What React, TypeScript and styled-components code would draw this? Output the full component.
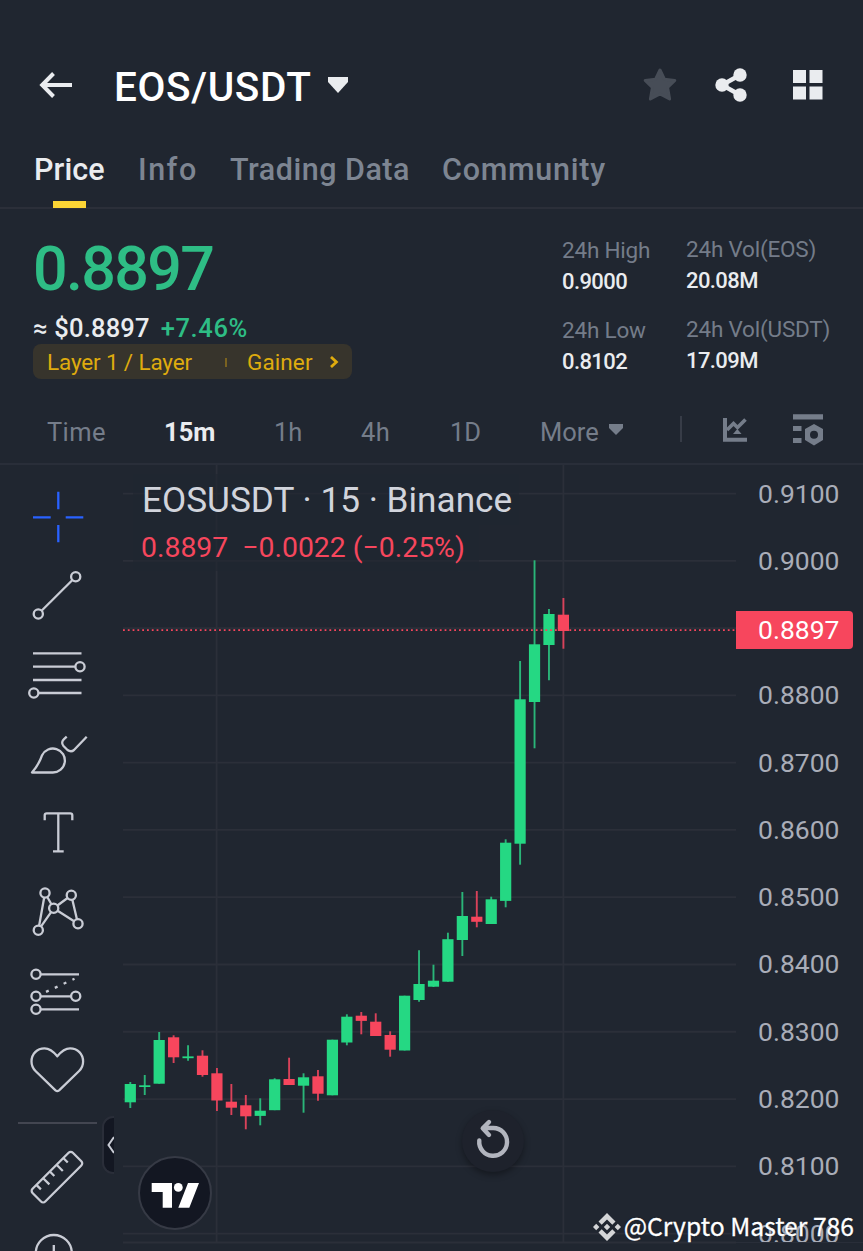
import React from "react";
import styled, { createGlobalStyle } from "styled-components";

const c = {
  bg: "#202630",
  line: "#2b2f39",
  text: "#eaecef",
  muted: "#7d8592",
  green: "#2ebd85",
  red: "#f6465d",
  up: "#25d883",
  tool: "#c9ccd5",
};

const Global = createGlobalStyle`
  html, body { margin: 0; background: ${c.bg}; }
  body { font-family: Roboto, "Liberation Sans", sans-serif; overflow: hidden; }
  * { box-sizing: border-box; }
  svg { display: block; }
`;

const Screen = styled.main`
  width: 863px;
  height: 1251px;
  overflow: hidden;
  display: flex;
  flex-direction: column;
  position: relative;
  color: ${c.text};
  background: ${c.bg};
`;

const Header = styled.header`
  height: 130px;
  padding: 40px 38px 0;
  display: flex;
  align-items: center;
`;

const Pair = styled.h1<{ $ls: number }>`
  margin: 4px 15px 0 40px;
  font-size: 40.5px;
  line-height: 46px;
  font-weight: 500;
  color: #fff;
  letter-spacing: ${(p) => p.$ls}px;
`;

const HeaderActions = styled.div`
  margin-left: auto;
  display: flex;
  align-items: center;
  gap: 38px;
`;

const Tabs = styled.nav`
  height: 79px;
  padding: 0 34px;
  display: grid;
  grid-template-columns: 104px 92px 212px auto;
  border-bottom: 2px solid ${c.line};
`;

const Tab = styled.a<{ $active?: boolean; $ls?: number }>`
  position: relative;
  justify-self: start;
  padding-top: 22px;
  font-size: 30.5px;
  line-height: 36px;
  font-weight: 500;
  white-space: nowrap;
  letter-spacing: ${(p) => p.$ls ?? 0}px;
  color: ${(p) => (p.$active ? c.text : c.muted)};
  &::after {
    content: "";
    display: ${(p) => (p.$active ? "block" : "none")};
    position: absolute;
    left: 19px;
    top: 71px;
    width: 33px;
    height: 7px;
    background: #fcd535;
  }
`;

const Summary = styled.section`
  height: 191px;
  padding: 24px 0 0 33px;
  display: grid;
  grid-template-columns: 529px 124px auto;
`;

const LastPrice = styled.div`
  margin-top: 1px;
  font-size: 61px;
  line-height: 70px;
  font-weight: 500;
  color: ${c.green};
  letter-spacing: -1.7px;
`;

const Fiat = styled.div`
  display: flex;
  gap: 11px;
  height: 30px;
  margin-top: 9px;
  font-size: 25.5px;
  line-height: 30px;
  font-weight: 500;
  letter-spacing: 0.2px;
`;

const Change = styled.span`
  color: ${c.green};
  letter-spacing: 0.6px;
`;

const Tag = styled.div`
  width: 319px;
  height: 35px;
  margin-top: 1px;
  padding: 0 13px 0 14px;
  border-radius: 8px;
  display: grid;
  grid-template-columns: 178px 22px 1fr 9px;
  align-items: center;
  background: #37342c;
  color: #dfab0e;
  font-size: 22.5px;
  line-height: 35px;
`;

const TagDivider = styled.i`
  width: 2px;
  height: 9px;
  background: #7a6220;
`;

const TagText = styled.span<{ $ls: number }>`
  padding-top: 1px;
  letter-spacing: ${(p) => p.$ls}px;
  white-space: nowrap;
`;

const Stats = styled.dl<{ $top: number }>`
  margin: ${(p) => p.$top}px 0 0;
  white-space: nowrap;
`;

const StatLabel = styled.dt<{ $ls: number }>`
  font-size: 22.5px;
  line-height: 32px;
  color: #747c89;
  letter-spacing: ${(p) => p.$ls}px;
`;

const StatValue = styled.dd`
  margin: 0 0 17px;
  font-size: 22px;
  line-height: 31px;
  font-weight: 500;
  letter-spacing: -0.6px;
`;

const Frames = styled.nav`
  height: 65px;
  padding-left: 47px;
  display: grid;
  grid-template-columns: 117px 110px 87px 89px 90px 140px 42px 70px auto;
  align-items: center;
  border-bottom: 2px solid #292e39;
  white-space: nowrap;
`;

const Frame = styled.span<{ $active?: boolean; $ls?: number }>`
  display: flex;
  align-items: center;
  gap: 9px;
  font-size: 25.5px;
  line-height: 30px;
  font-weight: ${(p) => (p.$active ? 700 : 400)};
  color: ${(p) => (p.$active ? c.text : "#757d8a")};
  letter-spacing: ${(p) => p.$ls ?? 0}px;
`;

const FrameDivider = styled.i`
  width: 2px;
  height: 26px;
  margin-top: -5px;
  background: #373c47;
`;

const FrameIcon = styled.svg`
  margin-top: -4px;
`;

const Workspace = styled.section`
  flex: 1;
  min-height: 0;
  display: grid;
  grid-template-columns: 123px 613px 127px;
  position: relative;
`;

const Toolbar = styled.aside`
  width: 115px;
  padding: 12px 0 0 18px;
`;

const ToolSvg = styled.svg<{ $active?: boolean }>`
  width: 79px;
  height: 79px;
  fill: none;
  stroke: ${(p) => (p.$active ? "#2962ff" : c.tool)};
  stroke-width: 2.3;
  stroke-linejoin: round;
`;

const ToolDivider = styled.hr`
  width: 79px;
  height: 2px;
  margin: 13px 0;
  border: 0;
  background: #434651;
`;

const Collapse = styled.button`
  position: absolute;
  left: 102px;
  top: 651px;
  width: 12px;
  height: 58px;
  padding: 0;
  border: 2px solid #2a2e39;
  border-right: 0;
  border-radius: 11px 0 0 11px;
  background: #131722;
  overflow: hidden;
`;

const Plot = styled.div`
  position: relative;
`;

const Legend = styled.div`
  position: absolute;
  left: 10px;
  top: 9px;
`;

const LegendTitle = styled.div`
  width: 386px;
  height: 51px;
  padding-left: 9px;
  font-size: 35.2px;
  line-height: 52px;
  color: #d1d4dc;
  white-space: nowrap;
  background: rgba(32, 38, 48, 0.6);
`;

const LegendValues = styled.div`
  display: flex;
  gap: 14px;
  width: 346px;
  height: 46px;
  padding-left: 8px;
  font-size: 28.4px;
  line-height: 45px;
  color: ${c.red};
  white-space: nowrap;
  background: rgba(32, 38, 48, 0.6);
`;

const Brand = styled.div`
  position: absolute;
  left: 15px;
  top: 691px;
  width: 74px;
  height: 74px;
  border-radius: 50%;
  border: 2px solid #363a45;
  background: #131722;
`;

const Reset = styled.button`
  position: absolute;
  left: 339px;
  top: 645px;
  width: 62px;
  height: 62px;
  padding: 0;
  border: 0;
  border-radius: 50%;
  background: #1e222c;
  box-shadow: 0 3px 6px rgba(0, 0, 0, 0.35);
`;

const Axis = styled.div`
  margin-top: -5px;
  height: 783px;
  overflow: hidden;
  border-bottom: 1px solid #292e39;
`;

const AxisRow = styled.div`
  height: 67.27px;
  padding: 0 0 1px 22px;
  display: flex;
  align-items: center;
  font-size: 26.5px;
  color: #a9adb8;
`;

const PriceTag = styled.div`
  width: 117px;
  height: 38px;
  margin: 4px 0 0 -22px;
  padding-left: 22px;
  line-height: 38px;
  border-radius: 0 4px 4px 0;
  color: #fff;
  background: #f7465d;
`;

const Watermark = styled.div`
  position: absolute;
  right: 9px;
  bottom: 4px;
  display: flex;
  align-items: center;
  gap: 3px;
  height: 40px;
  font: 400 24.7px/36px "Noto Sans CJK SC", "Noto Sans", sans-serif;
  color: #fff;
  white-space: nowrap;
  text-shadow: 0 0 2px rgba(0, 0, 0, 0.35);
  -webkit-text-stroke: 0.3px #fff;
  & > span { margin-top: -4px; }
`;

type Candle = [number, number, number, number, 0 | 1];

// wick top, body top, body bottom, wick bottom, rising
const candles: Candle[] = [
  [1082, 1084, 1102.3, 1108, 1],
  [1075, 1085.3, 1087, 1095, 1],
  [1032, 1040, 1083.7, 1083.7, 1],
  [1035.3, 1037.3, 1057.3, 1063, 0],
  [1045.3, 1056.4, 1058.2, 1060.7, 1],
  [1050.3, 1055.7, 1075, 1076.7, 0],
  [1068, 1073.3, 1100.5, 1111, 0],
  [1084, 1101.7, 1107.7, 1115, 0],
  [1095, 1105.3, 1116.3, 1129.3, 0],
  [1098.3, 1110.7, 1115.9, 1125.3, 1],
  [1078.3, 1079.3, 1110.2, 1110.2, 1],
  [1057.7, 1079, 1085, 1085, 0],
  [1073.3, 1077.3, 1085.7, 1112.7, 1],
  [1070, 1076.3, 1093.7, 1100.7, 0],
  [1039.7, 1039.7, 1095.3, 1095.3, 1],
  [1014.3, 1016.7, 1042.5, 1045.3, 1],
  [1012, 1015.7, 1020.9, 1034.3, 0],
  [1013.3, 1021.7, 1036, 1036, 0],
  [1031.3, 1035, 1049.7, 1056.7, 0],
  [995.7, 995.7, 1050.5, 1050.5, 1],
  [950.3, 984, 1000, 1001.7, 1],
  [964.7, 980.7, 986.7, 987, 1],
  [932.7, 939.2, 981.7, 981.7, 1],
  [892, 916, 940, 956, 1],
  [891, 916.7, 921.8, 927.3, 0],
  [896.7, 899.3, 924, 924, 1],
  [839.3, 842.7, 900.9, 907.3, 1],
  [661, 699.3, 843.7, 864.7, 1],
  [560.3, 644.3, 702, 748.3, 1],
  [609, 614, 645, 680.3, 1],
  [598, 614.7, 631, 648.7, 0],
].map((k) => [k[0] - 465, k[1] - 465, k[2] - 465, k[3] - 465, k[4]] as Candle);

const levels = Array.from({ length: 12 }, (_, i) => (0.91 - i * 0.01).toFixed(4));

const Node = ({ x, y }: { x: number; y: number }) => <circle cx={x} cy={y} r={4.6} fill={c.bg} />;

const Tool = ({ children, active }: { children: React.ReactNode; active?: boolean }) => (
  <ToolSvg viewBox="-39.5 -40 79 79" $active={active}>{children}</ToolSvg>
);

const Chart = () => (
  <svg width="613" height="786" viewBox="0 0 613 786">
    <g stroke={c.line} strokeWidth="1.8">
      {levels.map((l, i) => <path key={l} d={`M0 ${28.6 + i * 67.27}H613`} />)}
      <path d="M93.6 0V777M440.4 0V777M0 777.5H613" />
    </g>
    {candles.map(([h, t, b, l, up], i) => {
      const x = 7.3 + i * 14.437;
      return (
        <g key={i}>
          <path d={`M${x} ${h}V${l}`} stroke={up ? "#2ab578" : "#d9425a"} strokeWidth="1.9" />
          <rect x={x - 5.6} y={t} width="11.2" height={b - t} fill={up ? c.up : "#f7465d"} />
        </g>
      );
    })}
    <path d="M0 165.2H613" stroke={c.red} strokeWidth="1.7" strokeDasharray="1.8 3" />
  </svg>
);

export default function App() {
  return (
    <Screen>
      <Global />
      <Header>
        <svg width="36" height="30" viewBox="0 0 36 30" fill="none" stroke={c.text} strokeWidth="4">
          <path d="M34 15H5M15.5 3.5L4.2 15L15.5 26.5" />
        </svg>
        <Pair $ls={0.65}>EOS/USDT</Pair>
        <svg width="22" height="18" viewBox="0 0 22 18" fill={c.text}>
          <path d="M1 1H21V6L11 17L1 6Z" />
        </svg>
        <HeaderActions>
          <svg width="34" height="36" viewBox="0 0 34 36" fill="#474d57" stroke="#474d57" strokeWidth="3" strokeLinejoin="round">
            <path d="M17 3L21.4 12.2L31.8 13.4L24.6 20.4L26.6 32L17 27L7.4 32L9.4 20.4L2.2 13.4L12.6 12.2Z" />
          </svg>
          <svg width="34" height="36" viewBox="1 0 34 36" fill={c.text} stroke={c.text}>
            <path d="M26 8L8 18L26 28" fill="none" strokeWidth="4.4" />
            <g stroke="none"><circle cx="26" cy="8" r="6.7" /><circle cx="8" cy="18" r="6.7" /><circle cx="26" cy="28" r="6.7" /></g>
          </svg>
          <svg width="38" height="36" viewBox="0 0 38 36" fill={c.text}>
            <path d="M6 3H19V16H6ZM22.5 3H35.5V16H22.5ZM6 19.5H19V32.5H6ZM22.5 19.5H35.5V32.5H22.5Z" />
          </svg>
        </HeaderActions>
      </Header>

      <Tabs>
        <Tab $active $ls={0.1}>Price</Tab>
        <Tab $ls={1.5}>Info</Tab>
        <Tab $ls={0.5}>Trading Data</Tab>
        <Tab $ls={0.75}>Community</Tab>
      </Tabs>

      <Summary>
        <div>
          <LastPrice>0.8897</LastPrice>
          <Fiat><span>≈ $0.8897</span><Change>+7.46%</Change></Fiat>
          <Tag>
            <TagText $ls={-0.15}>Layer 1 / Layer</TagText>
            <TagDivider />
            <TagText $ls={0.1}>Gainer</TagText>
            <svg width="9" height="12" viewBox="0 0 9 12" fill="none" stroke="#dfab0e" strokeWidth="2.8"><path d="M1 1L6.4 6L1 11" /></svg>
          </Tag>
        </div>
        <Stats $top={1}>
          <StatLabel $ls={-0.2}>24h High</StatLabel>
          <StatValue>0.9000</StatValue>
          <StatLabel $ls={-0.2}>24h Low</StatLabel>
          <StatValue>0.8102</StatValue>
        </Stats>
        <Stats $top={0}>
          <StatLabel $ls={-0.2}>24h Vol(EOS)</StatLabel>
          <StatValue>20.08M</StatValue>
          <StatLabel $ls={-0.2}>24h Vol(USDT)</StatLabel>
          <StatValue>17.09M</StatValue>
        </Stats>
      </Summary>

      <Frames>
        <Frame $ls={0.4}>Time</Frame>
        <Frame $active>15m</Frame>
        <Frame>1h</Frame>
        <Frame $ls={0.3}>4h</Frame>
        <Frame>1D</Frame>
        <Frame>More
          <FrameIcon width="16" height="12" viewBox="0 0 16 12" fill="#757d8a"><path d="M1 0H15V4L8 11L1 4Z" /></FrameIcon>
        </Frame>
        <FrameDivider />
        <FrameIcon width="26" height="26" viewBox="0 0 26 26" fill="none" stroke="#757d8a" strokeWidth="4">
          <path d="M3 1V22.7H25" />
          <path d="M5 13L11.5 6.5L15.5 10.5L23.5 2.5" strokeWidth="3.6" />
          <path d="M11 17L15.3 12L19.5 17Z" fill="#757d8a" stroke="none" />
        </FrameIcon>
        <FrameIcon width="32" height="32" viewBox="0 0 32 32" fill="#757d8a">
          <path d="M1 0.3H31V5.6H1ZM1 12H9.5V17H1ZM1 24H9.5V29H1Z" />
          <path fillRule="evenodd" d="M22 10L31 15V26L22 31.5L13 26V15ZM22 16.7A4 4 0 1 0 22 24.7A4 4 0 1 0 22 16.7Z" />
        </FrameIcon>
      </Frames>

      <Workspace>
        <Toolbar>
          <Tool active><path d="M.8-25.3V-7.7M.8 8V25.3M-24.5 .3H-6.8M8.2 .3H25.8" /></Tool>
          <Tool><path d="M-19.2 18L18.2-19.3" /><Node x={18.2} y={-19.3} /><Node x={-19.2} y={18} /></Tool>
          <Tool>
            <path d="M-24.5-21.7H24M-24.5-8.3H22M-24.5 5H24M-23 18H24" />
            <Node x={22.5} y={-8.3} /><Node x={-23.7} y={18} />
          </Tool>
          <Tool>
            <path d="M-25.5 18.5H-4.7A12 12 0 1 0-15.4 1.2C-17 6-19 11-25.5 18.5Z" />
            <path d="M9.2-17.3L6.5-14.8Q3-11.5 6-8L10-4Q13.5-1.5 16.5-4L29.2-17.3" />
          </Tool>
          <Tool><path d="M-12.8-12.7V-17.7Q-12.8-19.7-10.8-19.7H12.8Q14.8-19.7 14.8-17.7V-12.7M.8-19.7V18.3M-4.5 18.3H6.2" /></Tool>
          <Tool>
            <path d="M-12.5-19L-19.2 18.3L-3.8-3.7ZM13.8-16.7L-3.8-3.7L20.5 11.7Z" />
            <Node x={-12.5} y={-19} /><Node x={13.8} y={-16.7} /><Node x={-3.8} y={-3.7} /><Node x={-19.2} y={18.3} /><Node x={20.5} y={11.7} />
          </Tool>
          <Tool>
            <path d="M-21.5-16.7H21.5M-21.5 5.3H18M-21.5 18.3H21.5" />
            <path d="M-11.5 .9L17-12.2" strokeDasharray="3 6.7" />
            <Node x={-21.5} y={-16.7} /><Node x={-21.5} y={5.3} /><Node x={18.2} y={5.3} /><Node x={-21.5} y={18.3} />
          </Tool>
          <Tool>
            <path d="M-.2-13.7C-4-18.5-8-21.7-13-21.7C-20.5-21.7-26-16-26-8.5C-26-4.5-24.5-1.5-22 1L-2 20.4Q-.2 21.8 1.6 20.4L21.6 1C24.1-1.5 25.6-4.5 25.6-8.5C25.6-16 20.1-21.7 12.6-21.7C7.6-21.7 3.6-18.5-.2-13.7Z" />
          </Tool>
          <ToolDivider />
          <Tool>
            <g transform="rotate(-45)">
              <rect x="-29" y="-9.3" width="57" height="18" rx="3" />
              <path d="M-20.5-9.3V-3M-11-9.3V-.5M-1.5-9.3V-3M8-9.3V-.5M17.5-9.3V-3" />
            </g>
          </Tool>
          <Tool><circle cx="-3.7" cy="-3" r="18" /><path d="M-3.7-11V5M-11.7-3H4.3" /></Tool>
        </Toolbar>

        <Plot>
          <Chart />
          <Legend>
            <LegendTitle>EOSUSDT · 15 · Binance</LegendTitle>
            <LegendValues><span>0.8897</span><span>−0.0022 (−0.25%)</span></LegendValues>
          </Legend>
          <Brand>
            <svg width="70" height="70" viewBox="0 0 70 70" fill="#fff">
              <path d="M11.7 25H32V49.7H22.7V34H11.7ZM48 25H59L49.3 49.7H38.3Z" /><circle cx="38.3" cy="29.4" r="4.4" />
            </svg>
          </Brand>
          <Reset>
            <svg width="62" height="62" viewBox="0 0 62 62" fill="none" stroke="#b2b5be" strokeWidth="4.4" strokeLinecap="round" strokeLinejoin="round">
              <path d="M17.3 30.5A13.9 13.9 0 1 0 31.3 18H22M27 12L20.7 18.3L27 25" />
            </svg>
          </Reset>
        </Plot>

        <Axis>
          {levels.map((l) => (
            <AxisRow key={l}>{l === "0.8900" ? <PriceTag>0.8897</PriceTag> : l}</AxisRow>
          ))}
        </Axis>
        <Collapse>
          <svg width="12" height="54" viewBox="0 0 12 54" fill="none" stroke={c.tool} strokeWidth="2"><path d="M10 19L4.5 27L10 35" /></svg>
        </Collapse>
      </Workspace>

      <Watermark>
        <svg width="28" height="28" viewBox="0 0 28 28" fill="#d4d5d7">
          <path d="M14 0L22.5 8.5L19.3 11.7L14 6.4L8.7 11.7L5.5 8.5ZM14 28L5.5 19.5L8.7 16.3L14 21.6L19.3 16.3L22.5 19.5ZM14 10.8L17.2 14L14 17.2L10.8 14ZM3.2 10.8L6.4 14L3.2 17.2L0 14ZM24.8 10.8L28 14L24.8 17.2L21.6 14Z" />
        </svg>
        <span>@Crypto Master 786</span>
      </Watermark>
    </Screen>
  );
}
